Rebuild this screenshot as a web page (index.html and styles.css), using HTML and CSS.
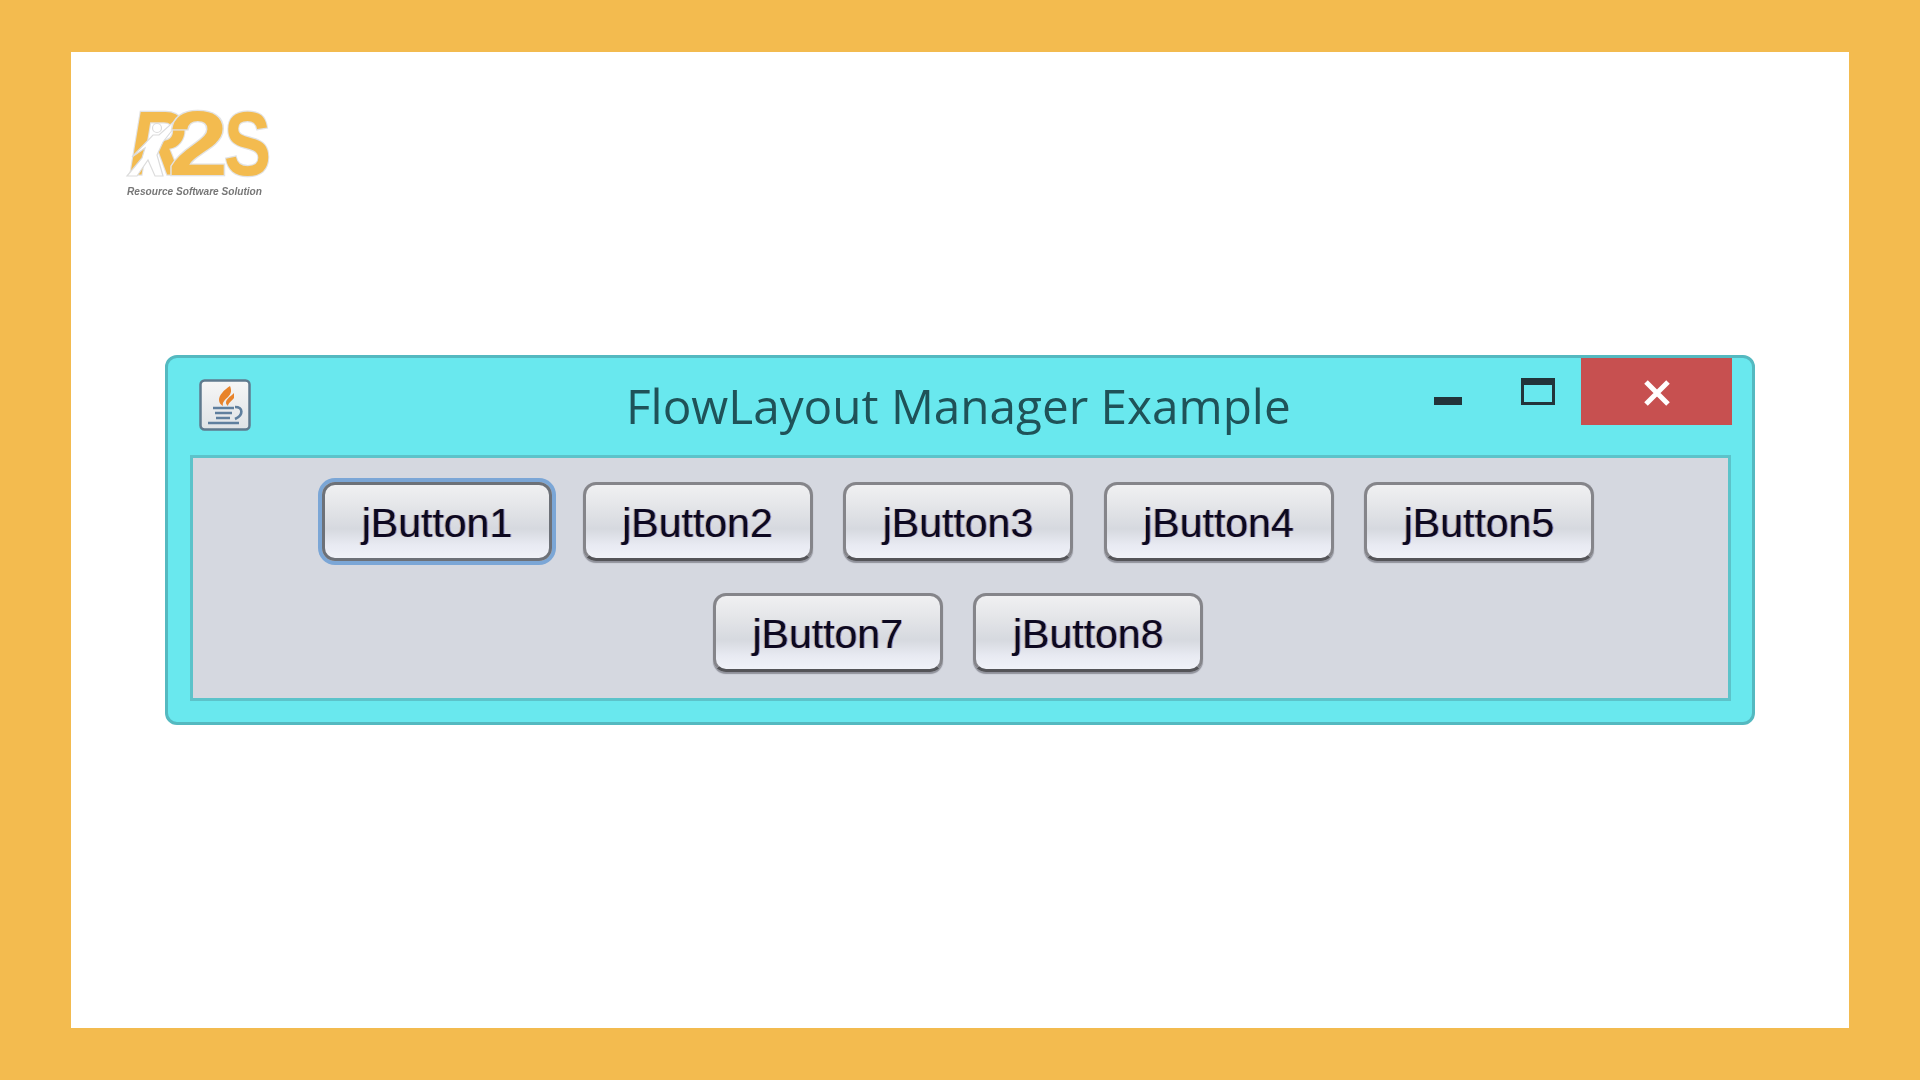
FILE: index.html
```html
<!DOCTYPE html>
<html lang="en">
<head>
  <meta charset="UTF-8">
  <title>FlowLayout Manager Example</title>
  <link rel="stylesheet" href="styles.css">
</head>
<body>
  <div class="sheet">
    <svg class="logo" width="180" height="120" viewBox="-10 -20 180 120">
      <text class="logo-mark logo-r" x="3" y="70" textLength="56" lengthAdjust="spacingAndGlyphs">R</text>
      <path class="logo-figure" d="M6 52 L27 30 L33 30 L54 11 L55 14 L37 37 L31 50 L37 71 L29 71 L22 55 L11 71 L1 71 L16 53 L19 43 Z"/>
      <circle class="logo-figure" cx="31" cy="23" r="4.5"/>
      <text class="logo-mark" x="42" y="70" textLength="60" lengthAdjust="spacingAndGlyphs">2</text>
      <text class="logo-mark" x="98" y="70" textLength="47" lengthAdjust="spacingAndGlyphs">S</text>
      <text class="logo-tag" x="1" y="90" textLength="135" lengthAdjust="spacingAndGlyphs">Resource Software Solution</text>
    </svg>

    <div class="window">
      <div class="titlebar">
        <svg class="app-icon" width="52" height="52" viewBox="0 0 52 52">
          <defs>
            <linearGradient id="iconbg" x1="0" y1="0" x2="0" y2="1">
              <stop offset="0" stop-color="#f6f6f6"/>
              <stop offset="1" stop-color="#dfe3e6"/>
            </linearGradient>
          </defs>
          <rect x="1.5" y="1.5" width="49" height="49" rx="4" fill="url(#iconbg)" stroke="#5f7a8e" stroke-width="2.5"/>
          <path d="M31 7 C25 11 20 16 20 21 C20 24 22 26 24 27 C23 23 26 21 29 18 C32 15 33 12 31 7 Z M35 14 C31 18 27 20 27 24 C27 25 28 26 29 27 C29 24 33 22 35 19 Z" fill="#e8832a"/>
          <path d="M14 29 H35 M16 34 H33 M17 39 H31 M9 44 H40" stroke="#5f7f9e" stroke-width="2.6" fill="none"/>
          <path d="M36 28 C44 28 45 36 36 40" stroke="#5f7f9e" stroke-width="2.6" fill="none"/>
        </svg>
        <div class="title">FlowLayout Manager Example</div>
        <div class="controls">
          <div class="ctl-min"></div>
          <div class="ctl-max"></div>
          <div class="ctl-close">
            <svg width="28" height="26" viewBox="0 0 28 26">
              <path d="M3 2 L25 24 M25 2 L3 24" stroke="#fff" stroke-width="5" fill="none"/>
            </svg>
          </div>
        </div>
      </div>
      <div class="panel">
        <button class="jbtn is-focus">jButton1</button>
        <button class="jbtn">jButton2</button>
        <button class="jbtn">jButton3</button>
        <button class="jbtn">jButton4</button>
        <button class="jbtn">jButton5</button>
        <button class="jbtn">jButton7</button>
        <button class="jbtn">jButton8</button>
      </div>
    </div>
  </div>
</body>
</html>
```

FILE: styles.css
```css
html, body { height: 100%; }
body { margin: 0; box-sizing: border-box; background: #f3bb4f; padding: 52px 71px 52px 71px; overflow: hidden; }
.sheet { background: #fff; height: 976px; padding: 33px 0 0 45px; box-sizing: border-box; }

.logo { display: block; height: 120px; filter: blur(0.6px); }
.logo-mark { font-family: "Liberation Sans", sans-serif; font-weight: bold; font-size: 90px; fill: #f3bb4f; stroke: #e2e2e2; stroke-width: 2.5px; paint-order: stroke; }
.logo-r { font-style: italic; }
.logo-figure { fill: #fff; stroke: #dcdcdc; stroke-width: 1.2px; }
.logo-tag { font-family: "Liberation Sans", sans-serif; font-weight: bold; font-style: italic; font-size: 11px; fill: #777; }

.window { width: 1590px; height: 370px; box-sizing: border-box; margin: 150px 0 0 49px; background: #69e8ee; border: 3px solid #54b9c0; border-radius: 12px; filter: blur(0.6px); }
.titlebar { display: flex; height: 97px; }
.app-icon { margin: 21px 0 0 31px; flex: none; }
.title { margin: 18px 0 0 375px; font-family: "Open Sans", sans-serif; font-size: 47.7px; line-height: 60px; color: #1f5258; white-space: nowrap; }
.controls { display: flex; margin-left: auto; margin-right: 20px; }
.ctl-min { width: 28px; height: 8px; margin: 39px 59px 0 0; background: #22343a; }
.ctl-max { width: 34px; height: 27px; margin: 20px 26px 0 0; box-sizing: border-box; border: 3px solid #22343a; border-top-width: 7px; }
.ctl-close { width: 151px; height: 67px; background: #c75050; display: flex; align-items: center; justify-content: center; padding-top: 2px; box-sizing: border-box; }

.panel { width: 1541px; height: 246px; box-sizing: border-box; margin-left: 22px; padding: 24px 134px 0 129px; background: #d5d8e0; border: 3px solid #5cc3ca; display: flex; flex-wrap: wrap; justify-content: center; align-content: flex-start; gap: 32px 30.5px; }
.jbtn { width: 230px; height: 79px; padding: 4px 0 0; font-family: "Liberation Sans", sans-serif; font-size: 41px; color: #0c0820; text-shadow: -1px 0 0 rgba(190, 110, 30, 0.45), 1px 0 0 rgba(30, 60, 190, 0.45); background: linear-gradient(#f0f0f2 0%, #e6e7ea 25%, #d6d9df 60%, #e8eaf2 82%, #f0f2f8 100%); border: 3px solid #85858a; border-bottom-color: #545458; border-radius: 13px; box-shadow: 0 2px 1px rgba(60, 60, 70, 0.45); }
.jbtn.is-focus { box-shadow: 0 0 0 4px #7ba6d6; border-color: #6d7178; }
```
